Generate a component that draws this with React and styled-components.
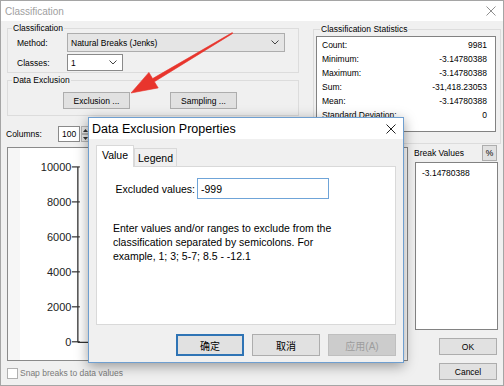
import React from 'react'
import styled, { createGlobalStyle } from 'styled-components'

const GlobalStyle = createGlobalStyle`
  html, body {
    margin: 0;
    padding: 0;
    background: #f0f0f0;
  }
  body {
    width: 504px;
    height: 386px;
    overflow: hidden;
  }
`

const Window = styled.div`
  position: relative;
  width: 504px;
  height: 386px;
  box-sizing: border-box;
  border: 1px solid #a5a5a5;
  background: #f0f0f0;
  font-family: "Liberation Sans", Arial, sans-serif;
  font-size: 8.5px;
  color: #000;
  display: flex;
  flex-direction: column;
  overflow: hidden;
`

const TitleBar = styled.div`
  height: 20px;
  flex: none;
  background: #fff;
  display: flex;
  align-items: center;
  justify-content: space-between;
  padding: 0 7px 0 4px;
  font-size: 10px;
  color: #a0a0a0;
`

const Body = styled.div`
  flex: 1;
  display: flex;
  flex-direction: column;
  padding-left: 5px;
`

const TopSection = styled.div`
  display: flex;
  gap: 14px;
  height: 123px;
  box-sizing: border-box;
  padding-top: 2px;
  flex: none;
`

const LeftTop = styled.div`
  width: 293px;
  display: flex;
  flex-direction: column;
`

const Group = styled.fieldset`
  margin: ${p => p.$mt || 0}px 0 0 ${p => p.$ml || 0}px;
  padding: ${p => p.$pad};
  border: 1px solid #dcdcdc;
  min-width: 0;
  width: ${p => p.$w}px;
  box-sizing: border-box;
`

const Legend = styled.legend`
  margin-left: ${p => p.$ml}px;
  padding: 0 1px;
  line-height: 10px;
  font-size: 8.5px;
`

const FormRow = styled.div`
  display: flex;
  align-items: center;
  height: ${p => p.$h}px;
  margin-top: ${p => p.$mt || 0}px;
`

const FieldLabel = styled.span`
  width: ${p => p.$w}px;
  flex: none;
`

const Combo = styled.div`
  width: ${p => p.$w}px;
  height: ${p => p.$h}px;
  box-sizing: border-box;
  border: 1px solid ${p => (p.$readonly ? '#adadad' : '#8a8a8a')};
  background: ${p => (p.$readonly ? '#e5e5e5' : '#fff')};
  display: flex;
  align-items: center;
  justify-content: space-between;
  padding: 0 5px 0 3px;
`

const WinButton = styled.div`
  width: ${p => p.$w}px;
  height: ${p => p.$h}px;
  box-sizing: border-box;
  border: 1px solid #adadad;
  background: #e1e1e1;
  display: flex;
  align-items: center;
  justify-content: center;
  margin-left: ${p => p.$ml || 0}px;
  margin-top: ${p => p.$mt || 0}px;
  flex: none;
`

const ColumnsRow = styled.div`
  display: flex;
  align-items: center;
  height: 16px;
  margin-top: 10px;
`

const SpinInput = styled.div`
  width: 22px;
  height: 16px;
  box-sizing: border-box;
  border: 1px solid #8a8a8a;
  background: #fff;
  display: flex;
  align-items: center;
  padding-left: 3px;
`

const SpinArrows = styled.div`
  width: 9px;
  height: 16px;
  display: flex;
  flex-direction: column;
  margin-left: 1px;
`

const SpinHalf = styled.div`
  flex: 1;
  background: #e6e6e6;
  border: 1px solid #b5b5b5;
  display: flex;
  align-items: center;
  justify-content: center;
`

const StatsBox = styled.div`
  height: 96px;
  box-sizing: border-box;
  border: 1px solid #828282;
  background: #fff;
  padding: 1px 8px 0 5px;
`

const StatRow = styled.div`
  display: flex;
  justify-content: space-between;
  line-height: 14px;
  height: 14px;
`

const BottomSection = styled.div`
  flex: 1;
  display: flex;
`

const LeftBottom = styled.div`
  width: 402px;
  display: flex;
  flex-direction: column;
`

const ChartPanel = styled.div`
  margin: 3px 0 0 1px;
  height: 214px;
  box-sizing: border-box;
  border: 1px solid #8a8a8a;
  background: #fff;
  display: flex;
`

const ChartStrip = styled.div`
  width: 12px;
  background: #f6f6f6;
`

const SnapRow = styled.label`
  display: flex;
  align-items: center;
  gap: 2px;
  margin: 6px 0 0 1px;
  height: 12px;
  color: #7a7a7a;
`

const CheckBox = styled.span`
  width: 11px;
  height: 11px;
  box-sizing: border-box;
  border: 1px solid #b0b0b0;
  background: #fff;
`

const RightBottom = styled.div`
  width: 85px;
  margin-left: 6px;
  display: flex;
  flex-direction: column;
`

const BreakHeader = styled.div`
  height: 18px;
  display: flex;
  align-items: center;
  justify-content: space-between;
  padding-right: 2px;
`

const BreakList = styled.div`
  margin-left: 1px;
  width: 83px;
  height: 168px;
  box-sizing: border-box;
  border: 1px solid #828282;
  background: #fff;
  padding: 3px 0 0 6px;
  line-height: 14px;
`

/* dialog */

const Dialog = styled.div`
  position: absolute;
  left: 87px;
  top: 116px;
  width: 316px;
  height: 246px;
  box-sizing: border-box;
  border: 1px solid #6f9fd0;
  background: #f0f0f0;
  box-shadow: 0 3px 12px rgba(0, 0, 0, 0.38);
  display: flex;
  flex-direction: column;
  font-size: 10.5px;
`

const DialogTitle = styled.div`
  height: 21px;
  background: #fff;
  display: flex;
  align-items: center;
  justify-content: space-between;
  padding: 0 7px 0 3px;
  font-size: 12.5px;
`

const DialogBody = styled.div`
  flex: 1;
  padding: 6px 7px 6px 7px;
  display: flex;
  flex-direction: column;
`

const TabStrip = styled.div`
  display: flex;
  align-items: flex-end;
  height: 21px;
`

const Tab = styled.div`
  width: ${p => p.$w}px;
  height: ${p => (p.$active ? 22 : 18)}px;
  box-sizing: border-box;
  border: 1px solid #d9d9d9;
  border-bottom: none;
  background: ${p => (p.$active ? '#fff' : '#f0f0f0')};
  display: flex;
  align-items: center;
  justify-content: center;
  margin-bottom: ${p => (p.$active ? -1 : 0)}px;
  position: relative;
  padding-bottom: ${p => (p.$active ? 3 : 0)}px;
`

const TabPanel = styled.div`
  height: 159px;
  box-sizing: border-box;
  border: 1px solid #d9d9d9;
  background: #fff;
  padding-top: 11px;
`

const ExcludeRow = styled.div`
  display: flex;
  align-items: center;
  height: 21px;
`

const ExcludeLabel = styled.span`
  width: 98px;
  text-align: right;
  margin-right: 2px;
`

const TextField = styled.div`
  width: 132px;
  height: 21px;
  box-sizing: border-box;
  border: 1px solid #6fa4d8;
  display: flex;
  align-items: center;
  padding-left: 3px;
`

const HelpText = styled.p`
  margin: 22px 0 0 16px;
  font-size: 10.5px;
  line-height: 14px;
`

const DialogButtons = styled.div`
  display: flex;
  justify-content: flex-end;
  gap: 8px;
  margin-top: 9px;
`

const DlgButton = styled.div`
  width: 68px;
  height: 22px;
  box-sizing: border-box;
  border: 1px solid ${p => (p.$default ? '#2f74b5' : p.$disabled ? '#bfbfbf' : '#adadad')};
  box-shadow: ${p => (p.$default ? 'inset 0 0 0 1px #2f74b5' : 'none')};
  background: ${p => (p.$disabled ? '#cccccc' : '#e1e1e1')};
  color: ${p => (p.$disabled ? '#9d9d9d' : '#000')};
  display: flex;
  align-items: center;
  justify-content: center;
  font-family: "Liberation Sans", "Noto Sans CJK SC", sans-serif;
  font-size: 10px;
`

const ArrowLayer = styled.svg`
  position: absolute;
  left: -1px;
  top: -1px;
  pointer-events: none;
`

const Chevron = () => (
  <svg width="8" height="5" viewBox="0 0 8 5">
    <path d="M0.5 0.5 L4 4 L7.5 0.5" fill="none" stroke="#444" strokeWidth="1" />
  </svg>
)

const CloseIcon = ({ color }) => (
  <svg width="10" height="10" viewBox="0 0 10 10">
    <path d="M0.5 0.5 L9.5 9.5 M9.5 0.5 L0.5 9.5" stroke={color} strokeWidth="1" />
  </svg>
)

const stats = [
  ['Count:', '9981'],
  ['Minimum:', '-3.14780388'],
  ['Maximum:', '-3.14780388'],
  ['Sum:', '-31,418.23053'],
  ['Mean:', '-3.14780388'],
  ['Standard Deviation:', '0'],
]

const ticks = [10000, 8000, 6000, 4000, 2000, 0]

const Histogram = () => (
  <svg width="388" height="212" viewBox="0 0 388 212">
    <line x1="58" y1="18.7" x2="58" y2="194.5" stroke="#333" strokeWidth="1.3" />
    <line x1="58" y1="194.5" x2="380" y2="194.5" stroke="#333" strokeWidth="1.3" />
    {ticks.map((t, i) => {
      const y = 18.7 + i * 35.06
      return (
        <g key={t}>
          <line x1="52" y1={y} x2="60" y2={y} stroke="#333" strokeWidth="1.2" />
          <text
            x="51.5"
            y={y + 4}
            textAnchor="end"
            fontFamily="Liberation Sans, Arial, sans-serif"
            fontSize="11"
            fill="#222"
          >
            {t}
          </text>
        </g>
      )
    })}
  </svg>
)

export default function App() {
  return (
    <>
      <GlobalStyle />
      <Window>
        <TitleBar>
          <span>Classification</span>
          <CloseIcon color="#8f8f8f" />
        </TitleBar>
        <Body>
          <TopSection>
            <LeftTop>
              <Group $ml={1} $w={292} $pad="0 12px 1px 9px">
                <Legend $ml={-5}>Classification</Legend>
                <FormRow $h={19}>
                  <FieldLabel $w={50}>Method:</FieldLabel>
                  <Combo $w={218} $h={19} $readonly>
                    <span>Natural Breaks (Jenks)</span>
                    <Chevron />
                  </Combo>
                </FormRow>
                <FormRow $h={17} $mt={2}>
                  <FieldLabel $w={50}>Classes:</FieldLabel>
                  <Combo $w={56} $h={17}>
                    <span>1</span>
                    <Chevron />
                  </Combo>
                </FormRow>
              </Group>
              <Group $ml={1} $mt={2} $w={292} $pad="7px 9px 6px 9px">
                <Legend $ml={-5}>Data Exclusion</Legend>
                <FormRow $h={17}>
                  <WinButton $w={67} $h={17} $ml={46}>Exclusion ...</WinButton>
                  <WinButton $w={67} $h={17} $ml={40}>Sampling ...</WinButton>
                </FormRow>
              </Group>
              <ColumnsRow>
                <FieldLabel $w={52}>Columns:</FieldLabel>
                <SpinInput>100</SpinInput>
                <SpinArrows>
                  <SpinHalf>
                    <svg width="5" height="3" viewBox="0 0 5 3">
                      <path d="M0 3 L2.5 0 L5 3 Z" fill="#333" />
                    </svg>
                  </SpinHalf>
                  <SpinHalf>
                    <svg width="5" height="3" viewBox="0 0 5 3">
                      <path d="M0 0 L2.5 3 L5 0 Z" fill="#333" />
                    </svg>
                  </SpinHalf>
                </SpinArrows>
              </ColumnsRow>
            </LeftTop>
            <Group $mt={1} $w={188} $pad="2px 4px 10px 2px">
              <Legend $ml={4}>Classification Statistics</Legend>
              <StatsBox>
                {stats.map(([k, v]) => (
                  <StatRow key={k}>
                    <span>{k}</span>
                    <span>{v}</span>
                  </StatRow>
                ))}
              </StatsBox>
            </Group>
          </TopSection>
          <BottomSection>
            <LeftBottom>
              <ChartPanel>
                <ChartStrip />
                <Histogram />
              </ChartPanel>
              <SnapRow>
                <CheckBox />
                <span>Snap breaks to data values</span>
              </SnapRow>
            </LeftBottom>
            <RightBottom>
              <BreakHeader>
                <span>Break Values</span>
                <WinButton $w={15} $h={16}>%</WinButton>
              </BreakHeader>
              <BreakList>-3.14780388</BreakList>
              <WinButton $w={58} $h={17} $ml={25} $mt={8}>OK</WinButton>
              <WinButton $w={58} $h={17} $ml={25} $mt={8}>Cancel</WinButton>
            </RightBottom>
          </BottomSection>
        </Body>

        <ArrowLayer width="504" height="386" viewBox="0 0 504 386">
          <polygon
            points="232.3,32.6 152.6,78.6 148.9,72.4 131,93 158.2,87.9 154.4,81.7 232.7,33.4"
            fill="#e8352d"
            stroke="#e8352d"
            strokeWidth="0.6"
            strokeLinejoin="round"
          />
        </ArrowLayer>

        <Dialog>
          <DialogTitle>
            <span>Data Exclusion Properties</span>
            <CloseIcon color="#222" />
          </DialogTitle>
          <DialogBody>
            <TabStrip>
              <Tab $w={38} $active>Value</Tab>
              <Tab $w={43}>Legend</Tab>
            </TabStrip>
            <TabPanel>
              <ExcludeRow>
                <ExcludeLabel>Excluded values:</ExcludeLabel>
                <TextField>-999</TextField>
              </ExcludeRow>
              <HelpText>
                Enter values and/or ranges to exclude from the
                <br />
                classification separated by semicolons. For
                <br />
                example, 1; 3; 5-7; 8.5 - -12.1
              </HelpText>
            </TabPanel>
            <DialogButtons>
              <DlgButton $default>确定</DlgButton>
              <DlgButton>取消</DlgButton>
              <DlgButton $disabled>应用(A)</DlgButton>
            </DialogButtons>
          </DialogBody>
        </Dialog>
      </Window>
    </>
  )
}
